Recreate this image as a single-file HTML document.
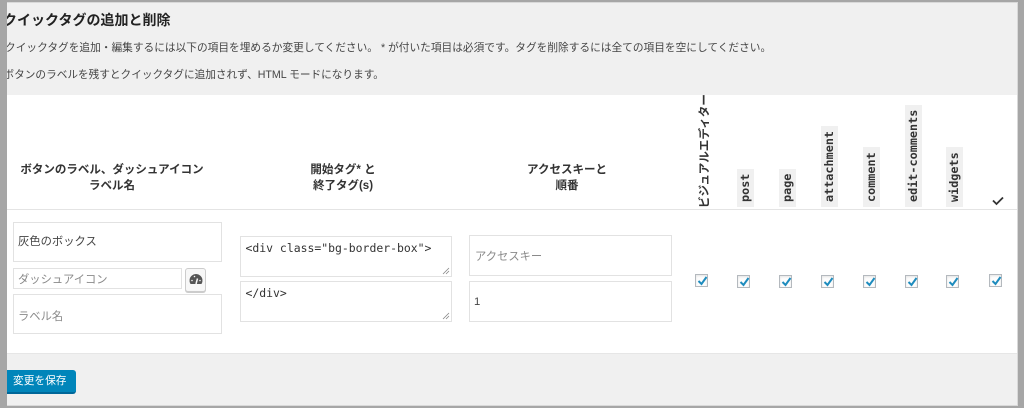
<!DOCTYPE html>
<html lang="ja"><head><meta charset="utf-8">
<style>
html,body{margin:0;padding:0}
body{width:1024px;height:408px;overflow:hidden;background:#a6a6a6;position:relative;font-family:"Liberation Sans","Noto Sans CJK JP",sans-serif;color:#333}
div{position:absolute;box-sizing:border-box;white-space:nowrap}
.box{background:#fff;border:1.5px solid #e2e2e2;font-size:11.3px;color:#444;display:flex;align-items:center;padding-left:4px}
.ph{color:#8a8a8a}
.th{font-size:11.5px;font-weight:bold;text-align:center;line-height:16px;color:#333}
.mono{font-family:"DejaVu Sans Mono","Liberation Mono",monospace;font-size:11.45px;color:#333}
.ta{background:#fff;border:1.5px solid #e2e2e2;padding:3px 0 0 4.5px;line-height:16px}
.rot{transform-origin:left top;transform:rotate(-90deg);background:#f0f0f0;padding:0 5px;height:17px;line-height:17px;font-family:"DejaVu Sans Mono","Liberation Mono",monospace;font-size:11.8px;color:#333;font-weight:bold}
.cb{width:13px;height:13px;background:#fdfdfd;border:1px solid #b4b9be;box-shadow:inset 0 1px 2px rgba(0,0,0,.1)}
.cb svg{position:absolute;left:0;top:0}
.grip{position:absolute;right:1px;bottom:1px}
</style></head><body>
<div style="left:7px;top:3px;width:1010px;height:402px;background:#f0f0f0;box-shadow:0 0 0 1px #d9d9d9"></div>
<div style="left:7px;top:95px;width:1010px;height:259px;background:#fff;border-bottom:1px solid #e6e6e6"></div>
<div style="left:7px;top:209px;width:1010px;height:1px;background:#e4e4e4"></div>

<div style="left:3px;top:9px;font-size:14px;font-weight:bold;line-height:22px;color:#222">クイックタグの追加と削除</div>
<div style="left:5px;top:40px;font-size:10.7px;line-height:17px;color:#444">クイックタグを追加・編集するには以下の項目を埋めるか変更してください。 * が付いた項目は必須です。タグを削除するには全ての項目を空にしてください。</div>
<div style="left:3.5px;top:67px;font-size:10.65px;line-height:17px;color:#444">ボタンのラベルを残すとクイックタグに追加されず、HTML モードになります。</div>

<div class="th" style="left:12px;top:162px;width:200px">ボタンのラベル、ダッシュアイコン<br>ラベル名</div>
<div class="th" style="left:288px;top:162px;width:110px">開始タグ* と<br>終了タグ(s)</div>
<div class="th" style="left:512px;top:162px;width:110px">アクセスキーと<br>順番</div>

<div class="box" style="left:13px;top:222px;width:209px;height:40px;padding-bottom:2px">灰色のボックス</div>
<div class="box ph" style="left:13px;top:268px;width:169px;height:21px">ダッシュアイコン</div>
<div style="left:185px;top:268px;width:21px;height:24px;background:#f7f7f7;border:1px solid #ccc;border-radius:3px;box-shadow:0 1px 0 #ccc">
<svg width="19" height="22" viewBox="0 0 19 22" style="position:absolute;left:0;top:0"><path d="M4.5 15 A6.5 6.5 0 1 1 15.5 15 Z" fill="#555"/><path d="M10 15 L11.5 9.5" stroke="#f7f7f7" stroke-width="1.5"/><circle cx="6" cy="11.5" r=".8" fill="#f7f7f7"/><circle cx="8.5" cy="7.5" r=".8" fill="#f7f7f7"/><circle cx="14" cy="11.5" r=".8" fill="#f7f7f7"/></svg></div>
<div class="box ph" style="left:13px;top:294px;width:209px;height:40px;padding-top:3px">ラベル名</div>

<div class="ta mono" style="left:240px;top:236px;width:212px;height:41px">&lt;div class="bg-border-box"&gt;<svg class="grip" width="8" height="8"><path d="M1 7L7 1M4 7L7 4" stroke="#888" stroke-width=".8"/></svg></div>
<div class="ta mono" style="left:240px;top:281px;width:212px;height:41px">&lt;/div&gt;<svg class="grip" width="8" height="8"><path d="M1 7L7 1M4 7L7 4" stroke="#888" stroke-width=".8"/></svg></div>
<div class="box ph" style="left:469px;top:235px;width:203px;height:41px;padding-left:5px">アクセスキー</div>
<div class="box" style="left:469px;top:281px;width:203px;height:41px">1</div>

<div style="left:696px;top:208px;transform-origin:left top;transform:rotate(-90deg);font-size:11.6px;font-weight:bold;line-height:17px;height:17px;color:#333">ビジュアルエディター</div>
<div class="rot" style="left:737px;top:207px">post</div>
<div class="rot" style="left:779px;top:207px">page</div>
<div class="rot" style="left:821px;top:207px">attachment</div>
<div class="rot" style="left:863px;top:207px">comment</div>
<div class="rot" style="left:905px;top:207px">edit-comments</div>
<div class="rot" style="left:946px;top:207px">widgets</div>
<svg width="14" height="12" style="position:absolute;left:991px;top:195px"><path d="M2 5.5L5.5 9L12 2.5" fill="none" stroke="#333" stroke-width="1.8"/></svg>

<div class="cb" style="left:695px;top:274px"><svg width="13" height="13"><path d="M2.5 6L5.5 9L10.5 2" fill="none" stroke="#1e8cbe" stroke-width="2"/></svg></div>
<div class="cb" style="left:737px;top:275px"><svg width="13" height="13"><path d="M2.5 6L5.5 9L10.5 2" fill="none" stroke="#1e8cbe" stroke-width="2"/></svg></div>
<div class="cb" style="left:779px;top:275px"><svg width="13" height="13"><path d="M2.5 6L5.5 9L10.5 2" fill="none" stroke="#1e8cbe" stroke-width="2"/></svg></div>
<div class="cb" style="left:821px;top:275px"><svg width="13" height="13"><path d="M2.5 6L5.5 9L10.5 2" fill="none" stroke="#1e8cbe" stroke-width="2"/></svg></div>
<div class="cb" style="left:863px;top:275px"><svg width="13" height="13"><path d="M2.5 6L5.5 9L10.5 2" fill="none" stroke="#1e8cbe" stroke-width="2"/></svg></div>
<div class="cb" style="left:905px;top:275px"><svg width="13" height="13"><path d="M2.5 6L5.5 9L10.5 2" fill="none" stroke="#1e8cbe" stroke-width="2"/></svg></div>
<div class="cb" style="left:946px;top:275px"><svg width="13" height="13"><path d="M2.5 6L5.5 9L10.5 2" fill="none" stroke="#1e8cbe" stroke-width="2"/></svg></div>
<div class="cb" style="left:989px;top:274px"><svg width="13" height="13"><path d="M2.5 6L5.5 9L10.5 2" fill="none" stroke="#1e8cbe" stroke-width="2"/></svg></div>

<div style="left:7px;top:370px;width:69px;height:24px;background:#0085ba;border-radius:0 3px 3px 0;border-bottom:2px solid #006799;color:#fff;font-size:10.7px;line-height:22px;padding-left:6px">変更を保存</div>

<div style="left:0;top:0;width:7px;height:408px;background:#a6a6a6"></div>
</body></html>
